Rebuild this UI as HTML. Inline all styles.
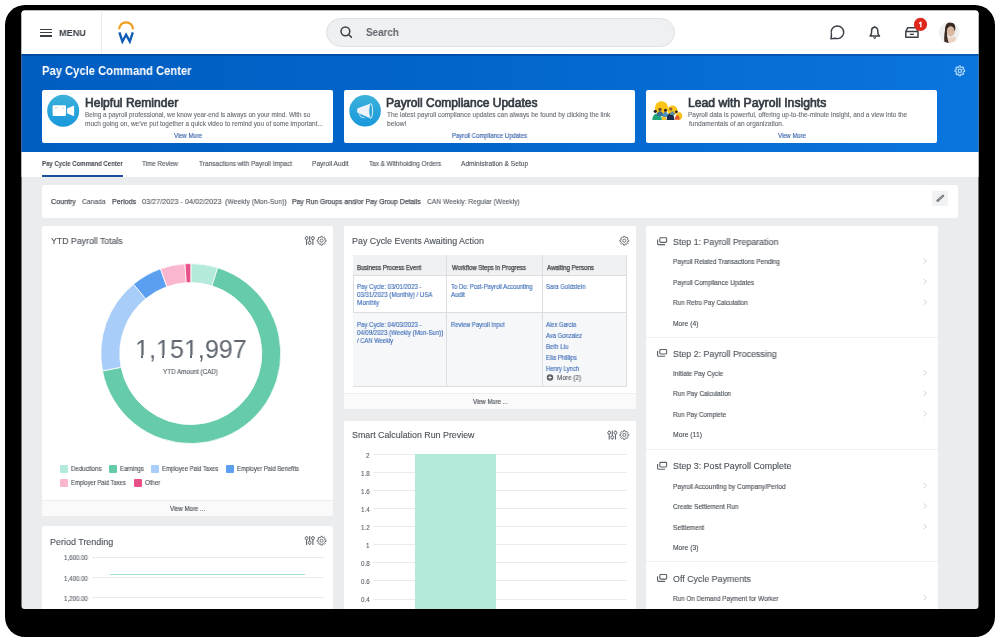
<!DOCTYPE html><html><head><meta charset="utf-8"><style>
html,body{margin:0;padding:0;width:1000px;height:642px;overflow:hidden;background:#fff;}
body{font-family:"Liberation Sans",sans-serif;position:relative;}
.frame{position:absolute;left:5px;top:5px;width:990px;height:632px;background:#000;border-radius:20px;}
.scr{position:absolute;left:0;top:0;width:1000px;height:642px;clip-path:inset(10.5px 21.5px 33px 21.5px round 3px);background:#ebeced;}
.t{position:absolute;white-space:nowrap;line-height:1;will-change:transform;}
.s{-webkit-text-stroke:0.12px currentColor;}
.r{position:absolute;}
svg{position:absolute;overflow:visible;}
</style></head><body>
<div class="frame"></div>
<div class="scr">
<div class="r" style="left:0.00px;top:0.00px;width:1000.00px;height:54.00px;background:#fff;"></div>
<div class="r" style="left:100.50px;top:10.00px;width:1.00px;height:44.00px;background:#ececec;"></div>
<div class="r" style="left:39.80px;top:28.50px;width:11.80px;height:1.50px;background:#3b4047;"></div>
<div class="r" style="left:39.80px;top:31.80px;width:11.80px;height:1.50px;background:#3b4047;"></div>
<div class="r" style="left:39.80px;top:35.10px;width:11.80px;height:1.50px;background:#3b4047;"></div>
<div class="t" style="left:58.99px;top:27.80px;font-size:9.8px;font-weight:700;color:#3b4047;transform:scaleX(0.931);transform-origin:0 0;">MENU</div>
<svg style="left:0;top:0" width="1000" height="60">
<path d="M119.2 29.2 A6.9 6.9 0 0 1 133 29.2" fill="none" stroke="#ef9f1f" stroke-width="2.2"/>
<path d="M119.4 32.4 L122.4 41.6 L126.1 34.8 L129.8 41.6 L132.8 32.4" fill="none" stroke="#0f5db5" stroke-width="2.4" stroke-linejoin="miter" stroke-miterlimit="3"/>
</svg><div class="r" style="left:325.50px;top:18.00px;width:349.00px;height:29.00px;background:#eff0f2;border:1px solid #dfe0e3;box-sizing:border-box;border-radius:15px;"></div>
<svg style="left:0;top:0" width="1000" height="60">
<circle cx="345.4" cy="31.3" r="4.4" fill="none" stroke="#3b4047" stroke-width="1.5"/>
<path d="M348.6 34.5 L351.4 37.3" stroke="#3b4047" stroke-width="1.6" stroke-linecap="round"/>
</svg><div class="t" style="left:365.52px;top:27.43px;font-size:10.6px;font-weight:700;color:#62676e;transform:scaleX(0.930);transform-origin:0 0;">Search</div>
<svg style="left:0;top:0" width="1000" height="60">
<path d="M831.5 34.45 A6.3 6.3 0 1 1 835.25 38.2 L831 38.8 Z" fill="none" stroke="#3b4047" stroke-width="1.45" stroke-linejoin="round"/>
<path d="M870 36 Q871.5 34.8 871.6 32 L871.6 30.6 A3.1 3.3 0 0 1 877.8 30.6 L877.8 32 Q877.9 34.8 879.5 36 Z" fill="none" stroke="#3b4047" stroke-width="1.5" stroke-linejoin="round"/>
<circle cx="874.7" cy="37.7" r="0.9" fill="none" stroke="#3b4047" stroke-width="1"/>
<circle cx="874.7" cy="26.8" r="0.7" fill="#3b4047"/>
<path d="M905.8 31.6 L907.6 27.8 L916.4 27.8 L918 31.6 L918 37.3 L905.8 37.3 Z M905.8 31.6 L918 31.6" fill="none" stroke="#3b4047" stroke-width="1.5" stroke-linejoin="round"/>
<path d="M909.8 34.3 L914 34.3" stroke="#3b4047" stroke-width="1.3"/>
<circle cx="920.5" cy="24.4" r="6.6" fill="#e0271b"/>
</svg><svg style="left:0;top:0" width="1000" height="60"><path d="M919.1 23.5 L920.9 22.2 L920.9 27.2" fill="none" stroke="#fff" stroke-width="1.3" stroke-linejoin="round"/></svg><svg style="left:0;top:0" width="1000" height="60">
<defs><clipPath id="av"><circle cx="949.1" cy="32.6" r="10.4"/></clipPath></defs>
<circle cx="949.1" cy="32.6" r="10.4" fill="#eeeff1"/>
<g clip-path="url(#av)">
<path d="M947.6 37 Q951 38.8 954.5 36.2 Q956.5 39 957.5 44 L946.5 44 Z" fill="#ead2c0"/>
<ellipse cx="950.7" cy="31.4" rx="3.9" ry="5.2" fill="#dbb8a1"/>
<path d="M945 30.5 Q944.8 22.6 950.5 22.3 Q955.8 22.5 955.3 29.5 L954.6 31.5 Q954.3 26.8 950.6 26.2 Q947.2 26.6 946.9 31 L947.2 36 Q947.6 40.5 949 43.5 L944.6 43 Q943.6 37 945 30.5 Z" fill="#3a2a21"/>
<circle cx="949.2" cy="30.4" r="0.45" fill="#8a6a58"/><circle cx="952.4" cy="30.4" r="0.45" fill="#8a6a58"/>
</g>
</svg><div class="r" style="left:0.00px;top:54.00px;width:1000.00px;height:98.00px;background:linear-gradient(90deg,#015dc0 0%,#0265cb 45%,#0a76de 100%);"></div>
<div class="r" style="left:0.00px;top:54.00px;width:1000.00px;height:1.50px;background:rgba(0,40,110,0.35);"></div>
<div class="t" style="left:41.65px;top:64.77px;font-size:12.2px;font-weight:700;color:#fff;transform:scaleX(0.920);transform-origin:0 0;">Pay Cycle Command Center</div>
<svg style="left:0;top:0" width="1000" height="200"><path d="M963.29 69.83 L964.64 70.06 L964.64 71.54 L963.29 71.77 L962.95 72.59 L963.75 73.70 L962.70 74.75 L961.59 73.95 L960.77 74.29 L960.54 75.64 L959.06 75.64 L958.83 74.29 L958.01 73.95 L956.90 74.75 L955.85 73.70 L956.65 72.59 L956.31 71.77 L954.96 71.54 L954.96 70.06 L956.31 69.83 L956.65 69.01 L955.85 67.90 L956.90 66.85 L958.01 67.65 L958.83 67.31 L959.06 65.96 L960.54 65.96 L960.77 67.31 L961.59 67.65 L962.70 66.85 L963.75 67.90 L962.95 69.01 Z" fill="none" stroke="#b5dafc" stroke-width="1.1" stroke-linejoin="round"/><circle cx="959.8" cy="70.8" r="1.67" fill="none" stroke="#b5dafc" stroke-width="1.1"/></svg><div class="r" style="left:42.40px;top:90.00px;width:290.90px;height:52.80px;background:#fff;border-radius:2px;"></div>
<div class="r" style="left:344.00px;top:90.00px;width:291.00px;height:52.80px;background:#fff;border-radius:2px;"></div>
<div class="r" style="left:646.00px;top:90.00px;width:291.00px;height:52.80px;background:#fff;border-radius:2px;"></div>
<svg style="left:0;top:0" width="1000" height="200">
<defs><linearGradient id="tg" x1="0" y1="0" x2="0" y2="1"><stop offset="0" stop-color="#3cb1da"/><stop offset="1" stop-color="#1898dc"/></linearGradient></defs>
<circle cx="63.2" cy="110.8" r="16" fill="url(#tg)"/>
<rect x="52.6" y="105.3" width="13.4" height="10.7" rx="1.2" fill="#fff"/>
<path d="M67.1 108.4 L74.1 105.6 L74.1 116.3 L67.1 113.3 Z" fill="#fff"/>
<path d="M54.5 107.8 L57.6 107.6" stroke="#9aa4ae" stroke-width="0.5"/>
<circle cx="63" cy="108" r="0.55" fill="#8a949e"/>
<circle cx="365.1" cy="110.8" r="15.8" fill="url(#tg)"/>
<path d="M357.6 108.2 L370.7 103.4 L370.7 118.5 L357.6 112.8 Q356.6 110.5 357.6 108.2 Z" fill="#eef2fa"/>
<ellipse cx="370.7" cy="110.95" rx="1.9" ry="7.4" fill="#2ca3d6" stroke="#f4f8fd" stroke-width="0.9"/>
<path d="M359.3 113.6 L360.6 116.9 L364.6 117.8" fill="none" stroke="#d4ebf7" stroke-width="0.9"/>
</svg><svg style="left:0;top:0" width="1000" height="200">
<circle cx="661.5" cy="107.8" r="6.6" fill="#f9c416"/>
<circle cx="672.5" cy="110.5" r="5" fill="#f9c416"/>
<ellipse cx="679.2" cy="116" rx="3" ry="3.8" fill="#f7c21c"/>
<path d="M652.3 120 Q652.5 114 657 113.5 Q661.5 114 662 120 Z" fill="#1fa57e"/>
<path d="M656.5 116 Q657 111.5 660 111.3 Q663 111.5 663.5 116 Z" fill="#3d6d8e"/>
<path d="M662.5 117 Q663 112 665.5 111.8 Q668 112 668.5 117 Z" fill="#4f8fb8"/>
<path d="M666.5 120 Q667 113.5 670.5 113.2 Q674 113.5 674.5 120 Z" fill="#1b2a48"/>
<path d="M670 115 Q670.5 111.5 672.5 111.3 Q674.5 111.5 675 115 Z" fill="#5c8fa8"/>
<path d="M674.8 119.8 Q675 115.5 677.2 115.3 Q679.4 115.5 679.6 119.8 Z" fill="#e0572b"/>
<circle cx="655.3" cy="111.3" r="1.6" fill="#2d2118"/>
<circle cx="660" cy="109.4" r="1.6" fill="#6b4a32"/>
<circle cx="665.5" cy="110.2" r="1.5" fill="#2d2118"/>
<circle cx="670.8" cy="109" r="1.5" fill="#8a5a3c"/>
<circle cx="676.4" cy="111.8" r="1.4" fill="#2d2118"/>
<rect x="662" y="117" width="4" height="3" fill="#f7c21c"/>
</svg><div class="t" style="left:84.61px;top:97.34px;font-size:12.0px;-webkit-text-stroke:0.66px currentColor;color:#333a42;transform:scaleX(1.005);transform-origin:0 0;">Helpful Reminder</div>
<div class="t s" style="left:85.07px;top:112.48px;font-size:6.4px;color:#6b7076;">Being a payroll professional, we know year-end is always on your mind. With so</div>
<div class="t s" style="left:85.17px;top:120.58px;font-size:6.4px;color:#6b7076;transform:scaleX(1.010);transform-origin:0 0;">much going on, we&#8217;ve put together a quick video to remind you of some important...</div>
<div class="t s" style="left:173.97px;top:132.98px;font-size:6.4px;color:#3560a8;transform:scaleX(0.936);transform-origin:0 0;">View More</div>
<div class="t" style="left:386.22px;top:97.34px;font-size:12.0px;-webkit-text-stroke:0.66px currentColor;color:#333a42;">Payroll Compliance Updates</div>
<div class="t s" style="left:387.05px;top:112.48px;font-size:6.4px;color:#6b7076;transform:scaleX(1.012);transform-origin:0 0;">The latest payroll compliance updates can always be found by clicking the link</div>
<div class="t s" style="left:386.77px;top:120.58px;font-size:6.4px;color:#6b7076;transform:scaleX(1.051);transform-origin:0 0;">below!</div>
<div class="t s" style="left:452.01px;top:132.98px;font-size:6.4px;color:#3560a8;transform:scaleX(0.930);transform-origin:0 0;">Payroll Compliance Updates</div>
<div class="t" style="left:687.80px;top:97.34px;font-size:12.0px;-webkit-text-stroke:0.66px currentColor;color:#333a42;transform:scaleX(1.016);transform-origin:0 0;">Lead with Payroll Insights</div>
<div class="t s" style="left:688.27px;top:112.48px;font-size:6.4px;color:#6b7076;transform:scaleX(1.012);transform-origin:0 0;">Payroll data is powerful, offering up-to-the-minute insight, and a view into the</div>
<div class="t s" style="left:688.71px;top:120.58px;font-size:6.4px;color:#6b7076;transform:scaleX(1.022);transform-origin:0 0;">fundamentals of an organization.</div>
<div class="t s" style="left:777.57px;top:132.98px;font-size:6.4px;color:#3560a8;transform:scaleX(0.929);transform-origin:0 0;">View More</div>
<div class="r" style="left:0.00px;top:152.00px;width:1000.00px;height:25.20px;background:#fff;"></div>
<div class="t" style="left:41.65px;top:161.21px;font-size:6.6px;font-weight:700;color:#3b4047;transform:scaleX(0.916);transform-origin:0 0;">Pay Cycle Command Center</div>
<div class="t s" style="left:142.46px;top:161.21px;font-size:6.6px;color:#50565d;transform:scaleX(0.952);transform-origin:0 0;">Time Review</div>
<div class="t s" style="left:199.05px;top:161.21px;font-size:6.6px;color:#50565d;transform:scaleX(0.984);transform-origin:0 0;">Transactions with Payroll Impact</div>
<div class="t s" style="left:311.86px;top:161.21px;font-size:6.6px;color:#50565d;">Payroll Audit</div>
<div class="t s" style="left:368.76px;top:161.21px;font-size:6.6px;color:#50565d;transform:scaleX(0.964);transform-origin:0 0;">Tax &amp; Withholding Orders</div>
<div class="t s" style="left:460.99px;top:161.21px;font-size:6.6px;color:#50565d;">Administration &amp; Setup</div>
<div class="r" style="left:42.00px;top:175.00px;width:80.70px;height:2.10px;background:#1a509e;"></div>
<div class="r" style="left:41.70px;top:185.20px;width:916.30px;height:33.00px;background:#fff;border-radius:2px;"></div>
<div class="t" style="left:51.44px;top:197.91px;font-size:7.2px;-webkit-text-stroke:0.25px currentColor;color:#4d5258;transform:scaleX(0.983);transform-origin:0 0;">Country</div>
<div class="t s" style="left:82.46px;top:197.57px;font-size:7.6px;color:#555a60;transform:scaleX(0.880);transform-origin:0 0;">Canada</div>
<div class="t" style="left:111.61px;top:197.91px;font-size:7.2px;-webkit-text-stroke:0.25px currentColor;color:#4d5258;transform:scaleX(0.993);transform-origin:0 0;">Periods</div>
<div class="t s" style="left:141.92px;top:197.57px;font-size:7.6px;color:#555a60;transform:scaleX(0.960);transform-origin:0 0;">03/27/2023 - 04/02/2023</div>
<div class="t s" style="left:224.57px;top:197.57px;font-size:7.6px;color:#555a60;transform:scaleX(0.910);transform-origin:0 0;">(Weekly (Mon-Sun))</div>
<div class="t" style="left:291.64px;top:197.91px;font-size:7.2px;-webkit-text-stroke:0.25px currentColor;color:#4d5258;transform:scaleX(0.948);transform-origin:0 0;">Pay Run Groups and/or Pay Group Details</div>
<div class="t s" style="left:427.06px;top:197.57px;font-size:7.6px;color:#555a60;transform:scaleX(0.878);transform-origin:0 0;">CAN Weekly: Regular (Weekly)</div>
<div class="r" style="left:932.00px;top:191.00px;width:16.00px;height:15.00px;background:#f1f2f3;border-radius:1.5px;"></div>
<svg style="left:0;top:0" width="1000" height="300">
<path d="M937.6 200.7 L943 195.9" stroke="#7f848a" stroke-width="2.6" stroke-linecap="round"/><path d="M939.2 198.5 L940.2 199.5 M940.9 197 L941.9 198" stroke="#c9ccd0" stroke-width="0.6"/>
</svg><div class="r" style="left:42.40px;top:226.20px;width:290.80px;height:290.30px;background:#fff;border-radius:2px;"></div>
<div class="r" style="left:343.70px;top:226.20px;width:292.00px;height:183.00px;background:#fff;border-radius:2px;"></div>
<div class="r" style="left:343.70px;top:420.50px;width:292.00px;height:279.50px;background:#fff;border-radius:2px;"></div>
<div class="r" style="left:42.40px;top:526.00px;width:290.80px;height:174.00px;background:#fff;border-radius:2px;"></div>
<div class="r" style="left:645.60px;top:226.20px;width:292.60px;height:473.80px;background:#fff;border-radius:2px;"></div>
<div class="t s" style="left:50.81px;top:237.45px;font-size:8.8px;color:#4d535a;transform:scaleX(0.993);transform-origin:0 0;">YTD Payroll Totals</div>
<svg style="left:0;top:0" width="1000" height="642"><path d="M306.6 236 L306.6 236.7 M306.6 239.7 L306.6 245" stroke="#5f656c" stroke-width="1.1"/><circle cx="306.6" cy="238.2" r="1.45" fill="none" stroke="#5f656c" stroke-width="1"/><path d="M309.7 236 L309.7 241.2 M309.7 244.2 L309.7 245" stroke="#5f656c" stroke-width="1.1"/><circle cx="309.7" cy="242.7" r="1.45" fill="none" stroke="#5f656c" stroke-width="1"/><path d="M312.9 236 L312.9 236.7 M312.9 239.7 L312.9 245" stroke="#5f656c" stroke-width="1.1"/><circle cx="312.9" cy="238.2" r="1.45" fill="none" stroke="#5f656c" stroke-width="1"/><path d="M324.81 239.81 L326.05 240.02 L326.05 241.38 L324.81 241.59 L324.50 242.34 L325.22 243.37 L324.27 244.32 L323.24 243.60 L322.49 243.91 L322.28 245.15 L320.92 245.15 L320.71 243.91 L319.96 243.60 L318.93 244.32 L317.98 243.37 L318.70 242.34 L318.39 241.59 L317.15 241.38 L317.15 240.02 L318.39 239.81 L318.70 239.06 L317.98 238.03 L318.93 237.08 L319.96 237.80 L320.71 237.49 L320.92 236.25 L322.28 236.25 L322.49 237.49 L323.24 237.80 L324.27 237.08 L325.22 238.03 L324.50 239.06 Z" fill="none" stroke="#6b7076" stroke-width="0.95" stroke-linejoin="round"/><circle cx="321.6" cy="240.7" r="1.53" fill="none" stroke="#6b7076" stroke-width="0.95"/></svg><svg style="left:0;top:0" width="1000" height="642"><path d="M190.80 263.60 A90 90 0 0 1 217.71 267.72 L212.03 285.85 A71 71 0 0 0 190.80 282.60 Z" fill="#b3eadb" stroke="#fff" stroke-width="0.8"/><path d="M217.71 267.72 A90 90 0 1 1 102.48 370.93 L121.13 367.27 A71 71 0 1 0 212.03 285.85 Z" fill="#66cbab" stroke="#fff" stroke-width="0.8"/><path d="M102.48 370.93 A90 90 0 0 1 133.55 284.15 L145.64 298.81 A71 71 0 0 0 121.13 367.27 Z" fill="#a9cdf9" stroke="#fff" stroke-width="0.8"/><path d="M133.55 284.15 A90 90 0 0 1 160.46 268.87 L166.87 286.76 A71 71 0 0 0 145.64 298.81 Z" fill="#5b9ff0" stroke="#fff" stroke-width="0.8"/><path d="M160.46 268.87 A90 90 0 0 1 184.99 263.79 L186.22 282.75 A71 71 0 0 0 166.87 286.76 Z" fill="#fbb6cf" stroke="#fff" stroke-width="0.8"/><path d="M184.99 263.79 A90 90 0 0 1 190.80 263.60 L190.80 282.60 A71 71 0 0 0 186.22 282.75 Z" fill="#e8508a" stroke="#fff" stroke-width="0.8"/></svg><div class="t" style="left:134.69px;top:337.31px;font-size:25.5px;color:#5f6670;transform:scaleX(0.985);transform-origin:0 0;">1,151,997</div>
<div class="r" style="left:135.50px;top:355.40px;width:5.60px;height:3.20px;background:#fff;"></div>
<div class="r" style="left:142.90px;top:355.40px;width:6.10px;height:3.20px;background:#fff;"></div>
<div class="r" style="left:155.50px;top:355.40px;width:6.60px;height:3.20px;background:#fff;"></div>
<div class="r" style="left:163.90px;top:355.40px;width:6.10px;height:3.20px;background:#fff;"></div>
<div class="r" style="left:183.50px;top:355.40px;width:6.60px;height:3.20px;background:#fff;"></div>
<div class="r" style="left:191.90px;top:355.40px;width:6.60px;height:3.20px;background:#fff;"></div>
<div class="t s" style="left:163.26px;top:368.91px;font-size:6.6px;color:#555b62;transform:scaleX(0.955);transform-origin:0 0;">YTD Amount (CAD)</div>
<div class="r" style="left:59.80px;top:465.00px;width:8.20px;height:7.60px;background:#b3eadb;border-radius:1px;"></div>
<div class="t s" style="left:71.40px;top:466.41px;font-size:6.6px;color:#4a5057;transform:scaleX(0.927);transform-origin:0 0;">Deductions</div>
<div class="r" style="left:108.80px;top:465.00px;width:8.00px;height:7.60px;background:#66cbab;border-radius:1px;"></div>
<div class="t s" style="left:120.21px;top:466.41px;font-size:6.6px;color:#4a5057;transform:scaleX(0.914);transform-origin:0 0;">Earnings</div>
<div class="r" style="left:151.00px;top:465.00px;width:7.70px;height:7.60px;background:#a9cdf9;border-radius:1px;"></div>
<div class="t s" style="left:162.12px;top:466.41px;font-size:6.6px;color:#4a5057;transform:scaleX(0.888);transform-origin:0 0;">Employee Paid Taxes</div>
<div class="r" style="left:226.10px;top:465.00px;width:7.70px;height:7.60px;background:#5b9ff0;border-radius:1px;"></div>
<div class="t s" style="left:237.21px;top:466.41px;font-size:6.6px;color:#4a5057;transform:scaleX(0.902);transform-origin:0 0;">Employer Paid Benefits</div>
<div class="r" style="left:59.80px;top:479.00px;width:8.20px;height:7.60px;background:#fbb6cf;border-radius:1px;"></div>
<div class="t s" style="left:71.42px;top:480.41px;font-size:6.6px;color:#4a5057;transform:scaleX(0.886);transform-origin:0 0;">Employer Paid Taxes</div>
<div class="r" style="left:134.00px;top:479.00px;width:7.70px;height:7.60px;background:#e8508a;border-radius:1px;"></div>
<div class="t s" style="left:145.31px;top:480.41px;font-size:6.6px;color:#4a5057;transform:scaleX(0.920);transform-origin:0 0;">Other</div>
<div class="r" style="left:42.40px;top:500.40px;width:290.80px;height:16.10px;background:#fafafa;border-top:1px solid #eeeeee;box-sizing:border-box;border-radius:0 0 2px 2px;"></div>
<div class="t s" style="left:170.47px;top:505.58px;font-size:6.4px;color:#444a51;transform:scaleX(0.939);transform-origin:0 0;">View More ...</div>
<div class="t s" style="left:50.26px;top:537.65px;font-size:8.8px;color:#4d535a;transform:scaleX(1.019);transform-origin:0 0;">Period Trending</div>
<svg style="left:0;top:0" width="1000" height="642"><path d="M306.6 536 L306.6 536.7 M306.6 539.7 L306.6 545" stroke="#5f656c" stroke-width="1.1"/><circle cx="306.6" cy="538.2" r="1.45" fill="none" stroke="#5f656c" stroke-width="1"/><path d="M309.7 536 L309.7 541.2 M309.7 544.2 L309.7 545" stroke="#5f656c" stroke-width="1.1"/><circle cx="309.7" cy="542.7" r="1.45" fill="none" stroke="#5f656c" stroke-width="1"/><path d="M312.9 536 L312.9 536.7 M312.9 539.7 L312.9 545" stroke="#5f656c" stroke-width="1.1"/><circle cx="312.9" cy="538.2" r="1.45" fill="none" stroke="#5f656c" stroke-width="1"/><path d="M324.81 539.81 L326.05 540.02 L326.05 541.38 L324.81 541.59 L324.50 542.34 L325.22 543.37 L324.27 544.32 L323.24 543.60 L322.49 543.91 L322.28 545.15 L320.92 545.15 L320.71 543.91 L319.96 543.60 L318.93 544.32 L317.98 543.37 L318.70 542.34 L318.39 541.59 L317.15 541.38 L317.15 540.02 L318.39 539.81 L318.70 539.06 L317.98 538.03 L318.93 537.08 L319.96 537.80 L320.71 537.49 L320.92 536.25 L322.28 536.25 L322.49 537.49 L323.24 537.80 L324.27 537.08 L325.22 538.03 L324.50 539.06 Z" fill="none" stroke="#6b7076" stroke-width="0.95" stroke-linejoin="round"/><circle cx="321.6" cy="540.7" r="1.53" fill="none" stroke="#6b7076" stroke-width="0.95"/></svg><div class="r" style="left:91.60px;top:556.55px;width:232.80px;height:0.90px;background:#eaebed;"></div>
<div class="t s" style="left:63.53px;top:555.27px;font-size:6.3px;color:#60666d;transform:scaleX(0.971);transform-origin:0 0;">1,600.00</div>
<div class="r" style="left:91.60px;top:576.95px;width:232.80px;height:0.90px;background:#eaebed;"></div>
<div class="t s" style="left:63.53px;top:575.67px;font-size:6.3px;color:#60666d;transform:scaleX(0.971);transform-origin:0 0;">1,400.00</div>
<div class="r" style="left:91.60px;top:597.35px;width:232.80px;height:0.90px;background:#eaebed;"></div>
<div class="t s" style="left:63.53px;top:596.07px;font-size:6.3px;color:#60666d;transform:scaleX(0.971);transform-origin:0 0;">1,200.00</div>
<div class="r" style="left:109.60px;top:574.00px;width:195.90px;height:1.00px;background:#a6e3cf;"></div>
<div class="t s" style="left:351.97px;top:237.45px;font-size:8.8px;color:#4d535a;transform:scaleX(1.011);transform-origin:0 0;">Pay Cycle Events Awaiting Action</div>
<svg style="left:0;top:0" width="1000" height="642"><path d="M627.51 239.81 L628.75 240.02 L628.75 241.38 L627.51 241.59 L627.20 242.34 L627.92 243.37 L626.97 244.32 L625.94 243.60 L625.19 243.91 L624.98 245.15 L623.62 245.15 L623.41 243.91 L622.66 243.60 L621.63 244.32 L620.68 243.37 L621.40 242.34 L621.09 241.59 L619.85 241.38 L619.85 240.02 L621.09 239.81 L621.40 239.06 L620.68 238.03 L621.63 237.08 L622.66 237.80 L623.41 237.49 L623.62 236.25 L624.98 236.25 L625.19 237.49 L625.94 237.80 L626.97 237.08 L627.92 238.03 L627.20 239.06 Z" fill="none" stroke="#6b7076" stroke-width="0.95" stroke-linejoin="round"/><circle cx="624.3" cy="240.7" r="1.53" fill="none" stroke="#6b7076" stroke-width="0.95"/></svg><div class="r" style="left:352.80px;top:254.90px;width:274.10px;height:132.30px;background:#fff;border:1px solid #dcdde0;box-sizing:border-box;"></div>
<div class="r" style="left:353.30px;top:255.40px;width:273.10px;height:19.30px;background:#f0f1f2;"></div>
<div class="r" style="left:353.30px;top:312.40px;width:273.10px;height:73.80px;background:#f6f7f8;"></div>
<div class="r" style="left:353.30px;top:274.50px;width:273.10px;height:0.80px;background:#dcdde0;"></div>
<div class="r" style="left:353.30px;top:312.00px;width:273.10px;height:0.80px;background:#dcdde0;"></div>
<div class="r" style="left:446.30px;top:255.00px;width:0.80px;height:132.00px;background:#dcdde0;"></div>
<div class="r" style="left:542.00px;top:255.00px;width:0.80px;height:132.00px;background:#dcdde0;"></div>
<div class="t" style="left:357.31px;top:265.08px;font-size:6.4px;-webkit-text-stroke:0.25px currentColor;color:#3d4248;transform:scaleX(0.931);transform-origin:0 0;">Business Process Event</div>
<div class="t" style="left:451.87px;top:265.08px;font-size:6.4px;-webkit-text-stroke:0.25px currentColor;color:#3d4248;transform:scaleX(0.942);transform-origin:0 0;">Workflow Steps in Progress</div>
<div class="t" style="left:546.69px;top:265.08px;font-size:6.4px;-webkit-text-stroke:0.25px currentColor;color:#3d4248;transform:scaleX(0.953);transform-origin:0 0;">Awaiting Persons</div>
<div class="t s" style="left:356.70px;top:283.70px;font-size:6.5px;color:#3a6bb6;transform:scaleX(0.931);transform-origin:0 0;">Pay Cycle: 03/01/2023 -</div>
<div class="t s" style="left:356.96px;top:291.70px;font-size:6.5px;color:#3a6bb6;transform:scaleX(0.942);transform-origin:0 0;">03/31/2023 (Monthly) / USA</div>
<div class="t s" style="left:356.68px;top:299.70px;font-size:6.5px;color:#3a6bb6;transform:scaleX(0.972);transform-origin:0 0;">Monthly</div>
<div class="t s" style="left:451.37px;top:283.70px;font-size:6.5px;color:#3a6bb6;transform:scaleX(0.914);transform-origin:0 0;">To Do: Post-Payroll Accounting</div>
<div class="t s" style="left:451.49px;top:291.70px;font-size:6.5px;color:#3a6bb6;transform:scaleX(0.942);transform-origin:0 0;">Audit</div>
<div class="t s" style="left:546.03px;top:283.70px;font-size:6.5px;color:#3a6bb6;transform:scaleX(0.918);transform-origin:0 0;">Sara Goldstein</div>
<div class="t s" style="left:356.70px;top:322.10px;font-size:6.5px;color:#3a6bb6;transform:scaleX(0.931);transform-origin:0 0;">Pay Cycle: 04/03/2023 -</div>
<div class="t s" style="left:356.96px;top:330.10px;font-size:6.5px;color:#3a6bb6;transform:scaleX(0.934);transform-origin:0 0;">04/09/2023 (Weekly (Mon-Sun))</div>
<div class="t s" style="left:357.20px;top:338.10px;font-size:6.5px;color:#3a6bb6;transform:scaleX(0.895);transform-origin:0 0;">/ CAN Weekly</div>
<div class="t s" style="left:451.02px;top:322.10px;font-size:6.5px;color:#3a6bb6;transform:scaleX(0.903);transform-origin:0 0;">Review Payroll Input</div>
<div class="t s" style="left:546.29px;top:322.10px;font-size:6.5px;color:#3a6bb6;transform:scaleX(0.896);transform-origin:0 0;">Alex Garcia</div>
<div class="t s" style="left:546.29px;top:333.05px;font-size:6.5px;color:#3a6bb6;transform:scaleX(0.895);transform-origin:0 0;">Ava Gonzalez</div>
<div class="t s" style="left:545.80px;top:344.00px;font-size:6.5px;color:#3a6bb6;transform:scaleX(0.935);transform-origin:0 0;">Beth Liu</div>
<div class="t s" style="left:545.81px;top:354.95px;font-size:6.5px;color:#3a6bb6;transform:scaleX(0.927);transform-origin:0 0;">Ella Phillips</div>
<div class="t s" style="left:545.81px;top:365.90px;font-size:6.5px;color:#3a6bb6;transform:scaleX(0.915);transform-origin:0 0;">Henry Lynch</div>
<svg style="left:0;top:0" width="1000" height="642"><circle cx="550" cy="377.5" r="3.2" fill="#585d63"/><path d="M548.3 377.5 L551.7 377.5 M550 375.8 L550 379.2" stroke="#fff" stroke-width="0.9"/></svg><div class="t s" style="left:556.68px;top:374.80px;font-size:6.5px;color:#555b62;transform:scaleX(0.978);transform-origin:0 0;">More (2)</div>
<div class="r" style="left:343.70px;top:393.00px;width:292.00px;height:16.20px;background:#fafafa;border-top:1px solid #eeeeee;box-sizing:border-box;border-radius:0 0 2px 2px;"></div>
<div class="t s" style="left:472.57px;top:399.08px;font-size:6.4px;color:#444a51;transform:scaleX(0.931);transform-origin:0 0;">View More ...</div>
<div class="t s" style="left:352.10px;top:431.05px;font-size:8.8px;color:#4d535a;transform:scaleX(1.006);transform-origin:0 0;">Smart Calculation Run Preview</div>
<svg style="left:0;top:0" width="1000" height="642"><path d="M609.2 430.6 L609.2 431.3 M609.2 434.3 L609.2 439.6" stroke="#5f656c" stroke-width="1.1"/><circle cx="609.2" cy="432.8" r="1.45" fill="none" stroke="#5f656c" stroke-width="1"/><path d="M612.3000000000001 430.6 L612.3000000000001 435.8 M612.3000000000001 438.8 L612.3000000000001 439.6" stroke="#5f656c" stroke-width="1.1"/><circle cx="612.3000000000001" cy="437.3" r="1.45" fill="none" stroke="#5f656c" stroke-width="1"/><path d="M615.5 430.6 L615.5 431.3 M615.5 434.3 L615.5 439.6" stroke="#5f656c" stroke-width="1.1"/><circle cx="615.5" cy="432.8" r="1.45" fill="none" stroke="#5f656c" stroke-width="1"/><path d="M627.51 434.11 L628.75 434.32 L628.75 435.68 L627.51 435.89 L627.20 436.64 L627.92 437.67 L626.97 438.62 L625.94 437.90 L625.19 438.21 L624.98 439.45 L623.62 439.45 L623.41 438.21 L622.66 437.90 L621.63 438.62 L620.68 437.67 L621.40 436.64 L621.09 435.89 L619.85 435.68 L619.85 434.32 L621.09 434.11 L621.40 433.36 L620.68 432.33 L621.63 431.38 L622.66 432.10 L623.41 431.79 L623.62 430.55 L624.98 430.55 L625.19 431.79 L625.94 432.10 L626.97 431.38 L627.92 432.33 L627.20 433.36 Z" fill="none" stroke="#6b7076" stroke-width="0.95" stroke-linejoin="round"/><circle cx="624.3" cy="435" r="1.53" fill="none" stroke="#6b7076" stroke-width="0.95"/></svg><div class="r" style="left:373.00px;top:453.85px;width:254.20px;height:0.90px;background:#eaebed;"></div>
<div class="t s" style="left:366.01px;top:452.77px;font-size:6.3px;color:#60666d;">2</div>
<div class="r" style="left:373.00px;top:471.94px;width:254.20px;height:0.90px;background:#eaebed;"></div>
<div class="t s" style="left:360.72px;top:470.86px;font-size:6.3px;color:#60666d;">1.8</div>
<div class="r" style="left:373.00px;top:490.03px;width:254.20px;height:0.90px;background:#eaebed;"></div>
<div class="t s" style="left:360.72px;top:488.95px;font-size:6.3px;color:#60666d;">1.6</div>
<div class="r" style="left:373.00px;top:508.12px;width:254.20px;height:0.90px;background:#eaebed;"></div>
<div class="t s" style="left:360.63px;top:507.04px;font-size:6.3px;color:#60666d;">1.4</div>
<div class="r" style="left:373.00px;top:526.21px;width:254.20px;height:0.90px;background:#eaebed;"></div>
<div class="t s" style="left:360.76px;top:525.13px;font-size:6.3px;color:#60666d;">1.2</div>
<div class="r" style="left:373.00px;top:544.30px;width:254.20px;height:0.90px;background:#eaebed;"></div>
<div class="t s" style="left:366.00px;top:543.22px;font-size:6.3px;color:#60666d;">1</div>
<div class="r" style="left:373.00px;top:562.39px;width:254.20px;height:0.90px;background:#eaebed;"></div>
<div class="t s" style="left:360.72px;top:561.31px;font-size:6.3px;color:#60666d;">0.8</div>
<div class="r" style="left:373.00px;top:580.48px;width:254.20px;height:0.90px;background:#eaebed;"></div>
<div class="t s" style="left:360.72px;top:579.40px;font-size:6.3px;color:#60666d;">0.6</div>
<div class="r" style="left:373.00px;top:598.57px;width:254.20px;height:0.90px;background:#eaebed;"></div>
<div class="t s" style="left:360.63px;top:597.49px;font-size:6.3px;color:#60666d;">0.4</div>
<div class="r" style="left:415.20px;top:454.30px;width:80.60px;height:165.70px;background:#b3eadb;"></div>
<svg style="left:0;top:0" width="1000" height="642"><rect x="659.85" y="237.75000000000003" width="6.8" height="4.6" rx="0.9" fill="none" stroke="#5a6067" stroke-width="1.1"/><path d="M657.6 239.40000000000003 L657.6 243.70000000000002 Q657.6 244.60000000000002 658.5 244.60000000000002 L665.1 244.60000000000002" fill="none" stroke="#5a6067" stroke-width="1.1"/></svg><div class="t s" style="left:673.10px;top:237.87px;font-size:8.9px;color:#4d535a;transform:scaleX(0.993);transform-origin:0 0;">Step 1: Payroll Preparation</div>
<div class="t s" style="left:672.97px;top:258.93px;font-size:6.7px;color:#484e54;transform:scaleX(0.958);transform-origin:0 0;">Payroll Related Transactions Pending</div>
<svg style="left:0;top:0" width="1000" height="642"><path d="M923.8 258.3 L926.3 260.90000000000003 L923.8 263.50000000000006" fill="none" stroke="#b8bcc1" stroke-width="0.7"/></svg><div class="t s" style="left:672.97px;top:279.53px;font-size:6.7px;color:#484e54;transform:scaleX(0.961);transform-origin:0 0;">Payroll Compliance Updates</div>
<svg style="left:0;top:0" width="1000" height="642"><path d="M923.8 278.90000000000003 L926.3 281.50000000000006 L923.8 284.1000000000001" fill="none" stroke="#b8bcc1" stroke-width="0.7"/></svg><div class="t s" style="left:672.98px;top:300.13px;font-size:6.7px;color:#484e54;transform:scaleX(0.950);transform-origin:0 0;">Run Retro Pay Calculation</div>
<svg style="left:0;top:0" width="1000" height="642"><path d="M923.8 299.5 L926.3 302.1 L923.8 304.70000000000005" fill="none" stroke="#b8bcc1" stroke-width="0.7"/></svg><div class="t s" style="left:672.95px;top:320.73px;font-size:6.7px;color:#484e54;transform:scaleX(1.006);transform-origin:0 0;">More (4)</div>
<div class="r" style="left:645.60px;top:336.80px;width:292.60px;height:0.80px;background:#eeeff0;"></div>
<svg style="left:0;top:0" width="1000" height="642"><rect x="659.85" y="349.45" width="6.8" height="4.6" rx="0.9" fill="none" stroke="#5a6067" stroke-width="1.1"/><path d="M657.6 351.1 L657.6 355.40000000000003 Q657.6 356.3 658.5 356.3 L665.1 356.3" fill="none" stroke="#5a6067" stroke-width="1.1"/></svg><div class="t s" style="left:673.10px;top:349.57px;font-size:8.9px;color:#4d535a;transform:scaleX(0.995);transform-origin:0 0;">Step 2: Payroll Processing</div>
<div class="t s" style="left:672.90px;top:370.63px;font-size:6.7px;color:#484e54;transform:scaleX(0.970);transform-origin:0 0;">Initiate Pay Cycle</div>
<svg style="left:0;top:0" width="1000" height="642"><path d="M923.8 370.0 L926.3 372.6 L923.8 375.20000000000005" fill="none" stroke="#b8bcc1" stroke-width="0.7"/></svg><div class="t s" style="left:672.97px;top:391.23px;font-size:6.7px;color:#484e54;transform:scaleX(0.959);transform-origin:0 0;">Run Pay Calculation</div>
<svg style="left:0;top:0" width="1000" height="642"><path d="M923.8 390.6 L926.3 393.20000000000005 L923.8 395.80000000000007" fill="none" stroke="#b8bcc1" stroke-width="0.7"/></svg><div class="t s" style="left:672.98px;top:411.83px;font-size:6.7px;color:#484e54;transform:scaleX(0.946);transform-origin:0 0;">Run Pay Complete</div>
<svg style="left:0;top:0" width="1000" height="642"><path d="M923.8 411.2 L926.3 413.8 L923.8 416.40000000000003" fill="none" stroke="#b8bcc1" stroke-width="0.7"/></svg><div class="t s" style="left:672.94px;top:432.43px;font-size:6.7px;color:#484e54;transform:scaleX(1.015);transform-origin:0 0;">More (11)</div>
<div class="r" style="left:645.60px;top:448.50px;width:292.60px;height:0.80px;background:#eeeff0;"></div>
<svg style="left:0;top:0" width="1000" height="642"><rect x="659.85" y="462.34999999999997" width="6.8" height="4.6" rx="0.9" fill="none" stroke="#5a6067" stroke-width="1.1"/><path d="M657.6 464.0 L657.6 468.3 Q657.6 469.2 658.5 469.2 L665.1 469.2" fill="none" stroke="#5a6067" stroke-width="1.1"/></svg><div class="t s" style="left:673.10px;top:462.47px;font-size:8.9px;color:#4d535a;">Step 3: Post Payroll Complete</div>
<div class="t s" style="left:672.96px;top:483.53px;font-size:6.7px;color:#484e54;transform:scaleX(0.974);transform-origin:0 0;">Payroll Accounting by Company/Period</div>
<svg style="left:0;top:0" width="1000" height="642"><path d="M923.8 482.9 L926.3 485.5 L923.8 488.1" fill="none" stroke="#b8bcc1" stroke-width="0.7"/></svg><div class="t s" style="left:673.17px;top:504.13px;font-size:6.7px;color:#484e54;transform:scaleX(0.962);transform-origin:0 0;">Create Settlement Run</div>
<svg style="left:0;top:0" width="1000" height="642"><path d="M923.8 503.5 L926.3 506.1 L923.8 508.70000000000005" fill="none" stroke="#b8bcc1" stroke-width="0.7"/></svg><div class="t s" style="left:673.20px;top:524.73px;font-size:6.7px;color:#484e54;transform:scaleX(0.979);transform-origin:0 0;">Settlement</div>
<svg style="left:0;top:0" width="1000" height="642"><path d="M923.8 524.1 L926.3 526.7 L923.8 529.3000000000001" fill="none" stroke="#b8bcc1" stroke-width="0.7"/></svg><div class="t s" style="left:672.95px;top:545.33px;font-size:6.7px;color:#484e54;transform:scaleX(1.006);transform-origin:0 0;">More (3)</div>
<div class="r" style="left:645.60px;top:561.40px;width:292.60px;height:0.80px;background:#eeeff0;"></div>
<svg style="left:0;top:0" width="1000" height="642"><rect x="659.85" y="574.55" width="6.8" height="4.6" rx="0.9" fill="none" stroke="#5a6067" stroke-width="1.1"/><path d="M657.6 576.1999999999999 L657.6 580.5 Q657.6 581.4 658.5 581.4 L665.1 581.4" fill="none" stroke="#5a6067" stroke-width="1.1"/></svg><div class="t s" style="left:673.08px;top:574.67px;font-size:8.9px;color:#4d535a;transform:scaleX(0.995);transform-origin:0 0;">Off Cycle Payments</div>
<div class="t s" style="left:672.98px;top:595.73px;font-size:6.7px;color:#484e54;transform:scaleX(0.946);transform-origin:0 0;">Run On Demand Payment for Worker</div>
<svg style="left:0;top:0" width="1000" height="642"><path d="M923.8 595.1 L926.3 597.7 L923.8 600.3000000000001" fill="none" stroke="#b8bcc1" stroke-width="0.7"/></svg></div></body></html>
